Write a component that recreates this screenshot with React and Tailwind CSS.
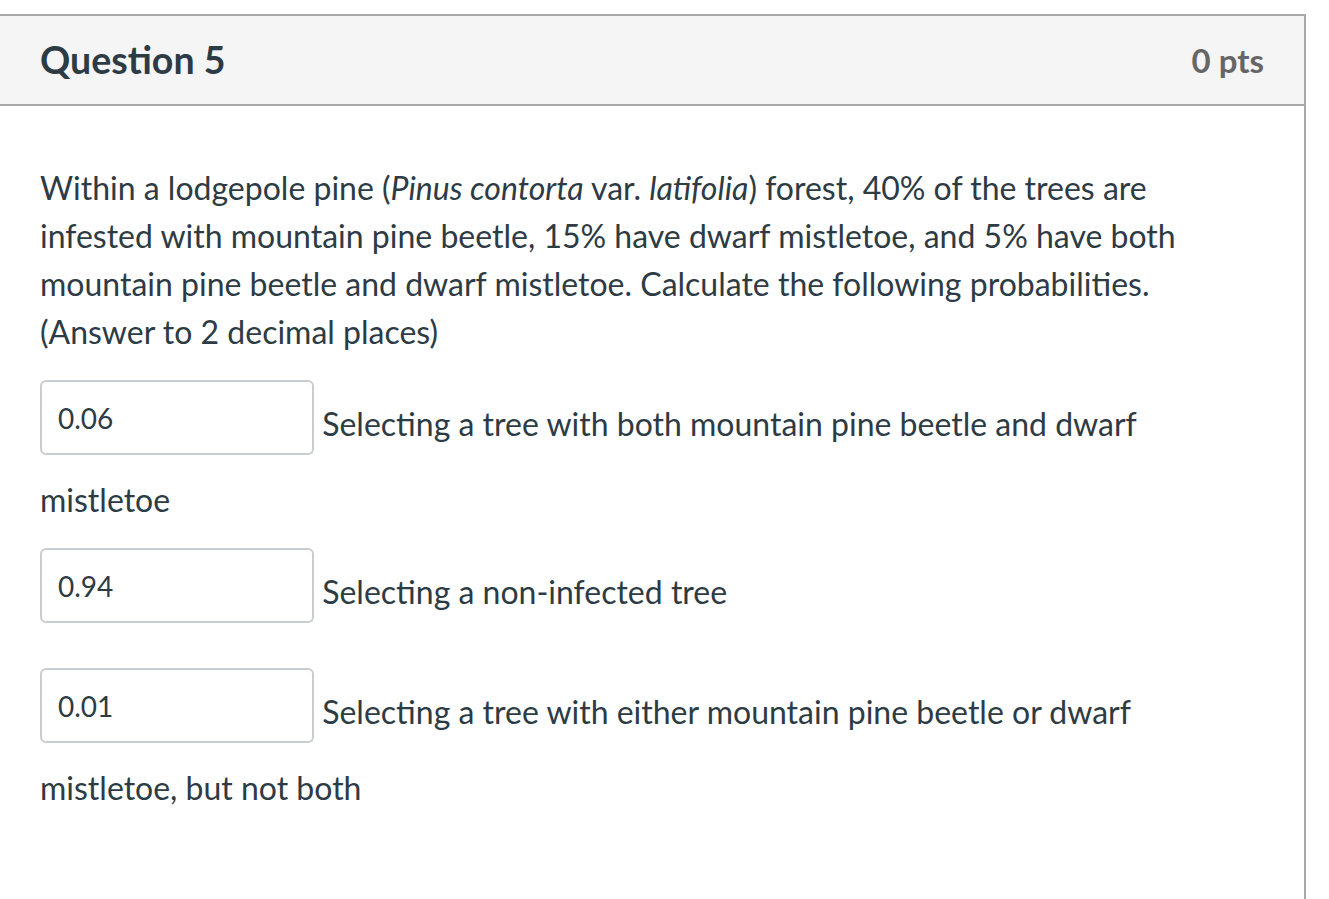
export default function App() {
  const rows = [
    { value: '0.06', first: 'Selecting a tree with both mountain pine beetle and dwarf', rest: 'mistletoe' },
    { value: '0.94', first: 'Selecting a non-infected tree', rest: null },
    { value: '0.01', first: 'Selecting a tree with either mountain pine beetle or dwarf', rest: 'mistletoe, but not both' },
  ];

  return (
    <div className="min-h-screen bg-white pt-[14px] text-[#2d3b45]" style={{ fontFamily: 'Lato, "Open Sans", sans-serif' }}>
      <div className="w-[1306px] border-t-2 border-r-2 border-[#a9a9a9] min-h-[890px]">
        {/* Header */}
        <div className="h-[90px] bg-[#f5f5f5] border-b-2 border-[#a9a9a9] flex items-center justify-between pl-[40px] pr-[40px]">
          <h2 className="text-[37.5px] font-bold leading-none">Question 5</h2>
          <span className="text-[33px] font-bold text-[#666666] leading-none">0 pts</span>
        </div>

        {/* Body */}
        <div className="pl-[40px] pr-[40px] pt-[34px] text-[32px] leading-[48px]">
          <p className="mt-[24px]">
            Within a lodgepole pine (<i>Pinus contorta</i> var. <i>latifolia</i>) forest, 40% of the trees are
            <br />
            infested with mountain pine beetle, 15% have dwarf mistletoe, and 5% have both
            <br />
            mountain pine beetle and dwarf mistletoe. Calculate the following probabilities.
            <br />
            (Answer to 2 decimal places)
          </p>

          {rows.map((r) => (
            <p key={r.value} className="mt-[24px]">
              <input
                type="text"
                readOnly
                defaultValue={r.value}
                className="inline-block align-middle mb-[21px] w-[274px] h-[75px] border-2 border-[#c7cdd1] rounded-[6px] bg-white pl-[16px] text-[28px] text-[#2d3b45] outline-none"
                style={{ fontFamily: 'Lato, "Open Sans", sans-serif' }}
              />{' '}
              {r.first}
              {r.rest && (
                <>
                  <br />
                  {r.rest}
                </>
              )}
            </p>
          ))}
        </div>
      </div>
    </div>
  );
}
